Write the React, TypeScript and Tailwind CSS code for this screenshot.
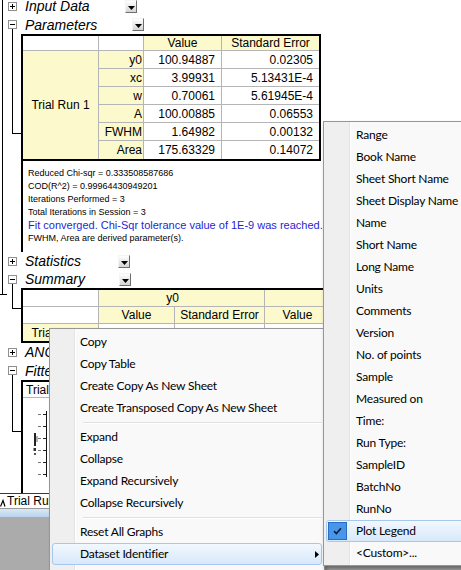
import React from "react";

function PM({ minus }: { minus?: boolean }) {
  return (
    <svg width="9" height="9" viewBox="0 0 9 9" className="block shrink-0">
      <rect x="0.5" y="0.5" width="8" height="8" fill="#fff" stroke="#8f8f8f" />
      <line x1="2" y1="4.5" x2="7" y2="4.5" stroke="#000" />
      {!minus && <line x1="4.5" y1="2" x2="4.5" y2="7" stroke="#000" />}
    </svg>
  );
}

function DD() {
  return (
    <div className="w-[12px] h-[13px] border border-t-[#f4f4f4] border-l-[#f4f4f4] border-r-[#6e6e6e] border-b-[#6e6e6e] bg-gradient-to-b from-white to-[#d4d4d4] flex items-end justify-center pb-[2px]">
      <svg width="7" height="4" viewBox="0 0 7 4" className="block">
        <path d="M0 0H7L3.5 4Z" fill="#000" />
      </svg>
    </div>
  );
}

function TreeRow({ label, open, lw, hc }: { label: string; open?: boolean; lw: string; hc: string }) {
  return (
    <div className={`flex items-stretch shrink-0 ${hc}`}>
      <div className="w-[14px] shrink-0 flex flex-col pl-[1px] pt-[5px]">
        <PM minus={open} />
        {open && <div className="ml-[4px] w-px flex-1 bg-black" />}
      </div>
      <div className={`pl-[4px] ${lw} shrink-0 flex items-center italic text-[14px] leading-none text-black whitespace-nowrap`}>
        {label}
      </div>
      <div className="flex items-center">
        <DD />
      </div>
    </div>
  );
}

const params = [
  ["y0", "100.94887", "0.02305"],
  ["xc", "3.99931", "5.13431E-4"],
  ["w", "0.70061", "5.61945E-4"],
  ["A", "100.00885", "0.06553"],
  ["FWHM", "1.64982", "0.00132"],
  ["Area", "175.63329", "0.14072"],
];

function ParamTable() {
  return (
    <div className="shrink-0 w-[300px] border-2 border-black grid grid-cols-[76px_45px_78px_97px] grid-rows-[15px_repeat(6,18px)] text-[12px] leading-none text-black">
      <div className="bg-white border-r border-b border-[#b5b5b5]" />
      <div className="bg-white border-r border-b border-[#b5b5b5]" />
      <div className="bg-[#fcf9cc] border-r border-b border-[#b5b5b5] flex items-center justify-center">Value</div>
      <div className="bg-[#fcf9cc] border-b border-[#b5b5b5] flex items-center justify-center">Standard Error</div>
      <div className="row-span-6 bg-[#fcf9cc] border-r border-[#b5b5b5] flex items-center justify-center">Trial Run 1</div>
      {params.map((p, i) => {
        const last = i === params.length - 1;
        return (
          <React.Fragment key={p[0]}>
            <div className={`bg-[#fcf9cc] border-r border-[#b5b5b5] flex items-center justify-end pr-[1px] ${last ? "" : "border-b"}`}>{p[0]}</div>
            <div className={`bg-white border-r border-[#b5b5b5] flex items-center justify-end pr-[6px] ${last ? "" : "border-b"}`}>{p[1]}</div>
            <div className={`bg-white border-[#b5b5b5] flex items-center justify-end pr-[6px] ${last ? "" : "border-b"}`}>{p[2]}</div>
          </React.Fragment>
        );
      })}
    </div>
  );
}

function SummaryTable() {
  return (
    <div className="shrink-0 w-[390px] border-t-2 border-l-2 border-b-2 border-black grid grid-cols-[76px_76px_90px_66px_80px] grid-rows-[17px_17px_17px] text-[12px] leading-none text-black">
      <div className="bg-white border-r border-b border-[#b5b5b5]" />
      <div className="col-span-2 bg-[#fcf9cc] border-r border-b border-[#b5b5b5] flex items-center justify-center pr-[18px]">y0</div>
      <div className="col-span-2 bg-[#fcf9cc] border-b border-[#b5b5b5]" />
      <div className="bg-white border-r border-b border-[#b5b5b5]" />
      <div className="bg-[#fcf9cc] border-r border-b border-[#b5b5b5] flex items-center justify-center">Value</div>
      <div className="bg-[#fcf9cc] border-r border-b border-[#b5b5b5] flex items-center justify-center">Standard Error</div>
      <div className="bg-[#fcf9cc] border-r border-b border-[#b5b5b5] flex items-center justify-center">Value</div>
      <div className="bg-[#fcf9cc] border-b border-[#b5b5b5] flex items-center justify-center">Standard Error</div>
      <div className="bg-[#fcf9cc] border-r border-[#b5b5b5] flex items-center justify-center">Trial Run 1</div>
      <div className="bg-white border-r border-[#b5b5b5] flex items-center justify-end pr-[6px]">100.94887</div>
      <div className="bg-white border-r border-[#b5b5b5] flex items-center justify-end pr-[6px]">0.02305</div>
      <div className="bg-white border-r border-[#b5b5b5] flex items-center justify-end pr-[6px]">3.99931</div>
      <div className="bg-white flex items-center justify-end pr-[6px]">5.13431E-4</div>
    </div>
  );
}

function Graph() {
  const ticks = [16, 28, 40, 52, 64, 76];
  return (
    <svg width="120" height="96" viewBox="0 0 120 96" className="block">
      <line x1="23.5" y1="13" x2="23.5" y2="79" stroke="#111" strokeWidth="1" />
      {ticks.map((t) => (
        <g key={t}>
          <line x1="20" y1={t + 0.5} x2="23" y2={t + 0.5} stroke="#222" />
          <rect x="15" y={t} width="3" height="1" fill="#777" />
        </g>
      ))}
      <rect x="11" y="35" width="2" height="13" fill="#222" />
      <rect x="10.5" y="50" width="2.5" height="3" fill="#333" />
      <rect x="11" y="55" width="2" height="2" fill="#555" />
      <rect x="13.5" y="38" width="1" height="6" fill="#666" />
    </svg>
  );
}

const mainItems: (string | null)[] = [
  "Copy",
  "Copy Table",
  "Create Copy As New Sheet",
  "Create Transposed Copy As New Sheet",
  null,
  "Expand",
  "Collapse",
  "Expand Recursively",
  "Collapse Recursively",
  null,
  "Reset All Graphs",
];

const subItems = [
  "Range",
  "Book Name",
  "Sheet Short Name",
  "Sheet Display Name",
  "Name",
  "Short Name",
  "Long Name",
  "Units",
  "Comments",
  "Version",
  "No. of points",
  "Sample",
  "Measured on",
  "Time:",
  "Run Type:",
  "SampleID",
  "BatchNo",
  "RunNo",
];

export default function App() {
  return (
    <div className="relative w-[461px] h-[570px] overflow-hidden bg-white font-['Liberation_Sans',Arial,sans-serif] text-black">
      <div className="flex flex-col h-full">
        {/* report content */}
        <div className="h-[493px] shrink-0 overflow-hidden flex">
          <div className="w-[7px] shrink-0 flex flex-col">
            <div className="h-[294px] shrink-0 w-[3px] border-r border-black" />
            <div className="w-[7px] h-px shrink-0 bg-black" />
          </div>
          <div className="flex flex-col mt-[-3px]">
            <TreeRow label="Input Data" lw="w-[104px]" hc="h-[18px]" />
            <TreeRow label="Parameters" open lw="w-[111px]" hc="h-[19px]" />
            <div className="flex shrink-0">
              <div className="w-[14px] shrink-0">
                <div className="ml-[5px] w-[9px] h-[100px] border-l border-b border-black" />
              </div>
              <div className="flex flex-col">
                <ParamTable />
                <div className="shrink-0 h-[91px] w-[310px] border-l-2 border-black pl-[5px] pt-[6px] text-[9px] leading-[13px] whitespace-nowrap">
                  <div>Reduced Chi-sqr = 0.333508587686</div>
                  <div>COD(R^2) = 0.99964430949201</div>
                  <div>Iterations Performed = 3</div>
                  <div>Total Iterations in Session = 3</div>
                  <div className="text-[11px] leading-[13px] text-[#1f1fd4]">Fit converged. Chi-Sqr tolerance value of 1E-9 was reached.</div>
                  <div>FWHM, Area are derived parameter(s).</div>
                </div>
              </div>
            </div>
            <TreeRow label="Statistics" lw="w-[97px]" hc="h-[18px]" />
            <TreeRow label="Summary" open lw="w-[98px]" hc="h-[18px]" />
            <div className="flex shrink-0">
              <div className="w-[14px] shrink-0">
                <div className="ml-[5px] w-[9px] h-[21px] border-l border-b border-black" />
              </div>
              <SummaryTable />
            </div>
            <TreeRow label="ANOVA" lw="w-[60px]" hc="h-[18px]" />
            <TreeRow label="Fitted Curves Plot" open lw="w-[130px]" hc="h-[19px]" />
            <div className="flex shrink-0">
              <div className="w-[14px] shrink-0">
                <div className="ml-[5px] w-[9px] h-[52px] border-l border-b border-black" />
              </div>
              <div className="w-[300px] h-[140px] shrink-0 border-l-2 border-t-2 border-black">
                <div className="h-[16px] border-b border-[#b5b5b5] pl-[3px] text-[12px] leading-none flex items-center">Trial Run 1</div>
                <Graph />
              </div>
            </div>
          </div>
        </div>
        {/* sheet tabs */}
        <div className="h-[15px] shrink-0 border-t border-[#3a3a3a] bg-white flex items-center">
          <svg width="6" height="10" viewBox="0 0 6 10" className="block self-end mb-[1px]">
            <path d="M0.5 9.5L3 3.5L5 9.5" fill="none" stroke="#000" strokeWidth="1.2" />
          </svg>
          <span className="ml-[1px] text-[12px] leading-none whitespace-nowrap">Trial Run 1</span>
        </div>
        <div className="h-px shrink-0 bg-[#9a9a9a]" />
        <div className="h-[8px] shrink-0 bg-gradient-to-b from-[#d9e8f6] to-[#b9d3ec]" />
        <div className="flex-1 bg-[#ababab]" />
      </div>

      {/* main context menu */}
      <div className="absolute left-[49px] top-[328px] w-[276px] h-[260px] border border-[#979797] p-[2px] bg-[linear-gradient(to_right,#efefef_24px,#e2e3e3_24px,#e2e3e3_25px,#ffffff_25px,#ffffff_26px,#f9f9f9_26px)] font-['Lato',sans-serif] text-[12px] tracking-[-0.2px] text-black shadow-[2px_2px_3px_rgba(0,0,0,0.3)]">
        {mainItems.map((it, i) =>
          it === null ? (
            <div key={i} className="h-[7px] flex flex-col justify-center pl-[31px]">
              <div className="h-px bg-[#e0e0e0]" />
              <div className="h-px bg-white" />
            </div>
          ) : (
            <div key={i} className="h-[22px] flex items-center pl-[28px] whitespace-nowrap">
              {it}
            </div>
          )
        )}
        <div className="h-[22px] flex items-center pl-[27px] pr-[2px] rounded-[3px] border border-[#a6c8ee] bg-gradient-to-b from-[#f2f8fe] to-[#d8e8fb] whitespace-nowrap">
          Dataset Identifier
          <svg width="4" height="7" viewBox="0 0 4 7" className="block ml-auto">
            <path d="M0 0L4 3.5L0 7Z" fill="#000" />
          </svg>
        </div>
      </div>

      {/* submenu */}
      <div className="absolute left-[323px] top-[121px] w-[160px] border border-[#979797] p-[2px] pb-[1px] bg-[linear-gradient(to_right,#efefef_25px,#e2e3e3_25px,#e2e3e3_26px,#ffffff_26px,#ffffff_27px,#f9f9f9_27px)] font-['Lato',sans-serif] text-[12px] tracking-[-0.2px] text-black shadow-[2px_3px_4px_rgba(0,0,0,0.4)]">
        {subItems.map((it) => (
          <div key={it} className="h-[22px] flex items-center pl-[30px] whitespace-nowrap">
            {it}
          </div>
        ))}
        <div className="h-[22px] flex items-center rounded-[3px] border border-[#a6c8ee] bg-gradient-to-b from-[#f2f8fe] to-[#d8e8fb] whitespace-nowrap">
          <div className="ml-[1px] w-[19px] h-[18px] border border-[#2b6cc2] bg-[#4896ea] flex items-center justify-center">
            <svg width="9" height="8" viewBox="0 0 9 8" className="block">
              <path d="M1 4.2L3.4 6.5L8 1.2" fill="none" stroke="#0e1d3c" strokeWidth="1.6" />
            </svg>
          </div>
          <span className="ml-[9px]">Plot Legend</span>
        </div>
        <div className="h-[22px] flex items-center pl-[30px] whitespace-nowrap">&lt;Custom&gt;...</div>
      </div>
    </div>
  );
}
